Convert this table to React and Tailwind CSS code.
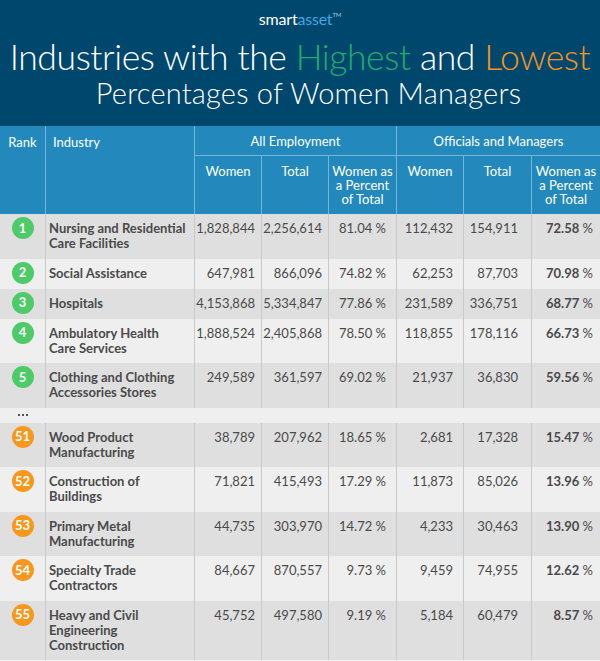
import React from 'react';

const COLS = 'grid grid-cols-[45px_149px_67px_67px_68px_67px_68px_69px]';

const top = [
  { rank: 1, name: ['Nursing and Residential', 'Care Facilities'], v: ['1,828,844', '2,256,614', '81.04', '112,432', '154,911', '72.58'] },
  { rank: 2, name: ['Social Assistance'], v: ['647,981', '866,096', '74.82', '62,253', '87,703', '70.98'] },
  { rank: 3, name: ['Hospitals'], v: ['4,153,868', '5,334,847', '77.86', '231,589', '336,751', '68.77'] },
  { rank: 4, name: ['Ambulatory Health', 'Care Services'], v: ['1,888,524', '2,405,868', '78.50', '118,855', '178,116', '66.73'] },
  { rank: 5, name: ['Clothing and Clothing', 'Accessories Stores'], v: ['249,589', '361,597', '69.02', '21,937', '36,830', '59.56'] },
];

const bottom = [
  { rank: 51, name: ['Wood Product', 'Manufacturing'], v: ['38,789', '207,962', '18.65', '2,681', '17,328', '15.47'] },
  { rank: 52, name: ['Construction of', 'Buildings'], v: ['71,821', '415,493', '17.29', '11,873', '85,026', '13.96'] },
  { rank: 53, name: ['Primary Metal', 'Manufacturing'], v: ['44,735', '303,970', '14.72', '4,233', '30,463', '13.90'] },
  { rank: 54, name: ['Specialty Trade', 'Contractors'], v: ['84,667', '870,557', '9.73', '9,459', '74,955', '12.62'] },
  { rank: 55, name: ['Heavy and Civil', 'Engineering', 'Construction'], v: ['45,752', '497,580', '9.19', '5,184', '60,479', '8.57'] },
];

const Row = ({ row, dark, low }) => (
  <div className={`${COLS} min-h-[30px] ${dark ? 'bg-[#dfdfdf]' : 'bg-[#efefef]'} text-[13px] leading-[15px] text-[#4a4a4a]`}>
    <div className="flex justify-center pt-[3px]">
      <div className={`w-[22px] h-[22px] rounded-full flex items-center justify-center text-white font-bold text-[13px] ${low ? 'bg-[#f7981d]' : 'bg-[#4ccb68]'}`}>
        {row.rank}
      </div>
    </div>
    <div className="border-l border-[#c9c9c9] pl-[3px] pt-[7px] pb-[7.5px] font-bold">
      {row.name.map((l) => <div key={l}>{l}</div>)}
    </div>
    <div className="border-l border-[#c9c9c9] text-right pr-[6px] pt-[7px]">{row.v[0]}</div>
    <div className="border-l border-[#c9c9c9] text-right pr-[6px] pt-[7px]">{row.v[1]}</div>
    <div className="border-l border-[#c9c9c9] text-right pr-[10px] pt-[7px]">{row.v[2]} %</div>
    <div className="border-l border-[#c9c9c9] text-right pr-[10px] pt-[7px]">{row.v[3]}</div>
    <div className="border-l border-[#c9c9c9] text-right pr-[13px] pt-[7px]">{row.v[4]}</div>
    <div className="border-l border-[#c9c9c9] text-right pr-[7px] pt-[7px]"><span className="font-bold">{row.v[5]}</span> %</div>
  </div>
);

export default function App() {
  return (
    <div className="w-[600px] h-[661px] overflow-hidden bg-[#efefef] font-['Lato',sans-serif]">
      <div className="h-[126px] bg-[#00476d] flex flex-col items-center text-white">
        <div className="mt-[9px] flex items-start text-[16px] leading-[20px] tracking-[-0.2px]">
          <span className="text-white">smart</span>
          <span className="text-[#3fa6e0]">asset</span>
          <span className="text-[6px] leading-[8px] text-[#9fc7e0] mt-[2px]">TM</span>
        </div>
        <div className="mt-[8px] text-[35.5px] leading-[40px] font-light tracking-[-0.4px] whitespace-nowrap">
          Industries with the <span className="text-[#1ead6f]">Highest</span> and <span className="text-[#f7941e]">Lowest</span>
        </div>
        <div className="pl-[17px] text-[29px] leading-[32px] font-light tracking-[0.2px] whitespace-nowrap">
          Percentages of Women Managers
        </div>
      </div>

      <div className={`${COLS} grid-rows-[30px_58px] bg-[#2389bc] text-white text-[13px] leading-[14px]`}>
        <div className="row-span-2 pt-[9px] text-center">Rank</div>
        <div className="row-span-2 border-l border-[#74b6da] pl-[7px] pt-[9px]">Industry</div>
        <div className="col-span-3 border-l border-b border-[#74b6da] flex items-center justify-center">All Employment</div>
        <div className="col-span-3 border-l border-b border-[#74b6da] flex items-center justify-center">Officials and Managers</div>
        <div className="border-l border-[#74b6da] text-center pt-[8px]">Women</div>
        <div className="border-l border-[#74b6da] text-center pt-[8px]">Total</div>
        <div className="border-l border-[#74b6da] text-center pt-[8px]">Women as<br />a Percent<br />of Total</div>
        <div className="border-l border-[#74b6da] text-center pt-[8px]">Women</div>
        <div className="border-l border-[#74b6da] text-center pt-[8px]">Total</div>
        <div className="border-l border-[#74b6da] text-center pt-[8px]">Women as<br />a Percent<br />of Total</div>
      </div>

      {top.map((r, i) => <Row key={r.rank} row={r} dark={i % 2 === 0} />)}
      <div className="h-[15px] bg-[#efefef] flex items-center pl-[18px] gap-[2px]">
        <span className="w-[2px] h-[2px] bg-[#555]" />
        <span className="w-[2px] h-[2px] bg-[#555]" />
        <span className="w-[2px] h-[2px] bg-[#555]" />
      </div>
      {bottom.map((r, i) => <Row key={r.rank} row={r} dark={i % 2 === 0} low />)}
    </div>
  );
}
